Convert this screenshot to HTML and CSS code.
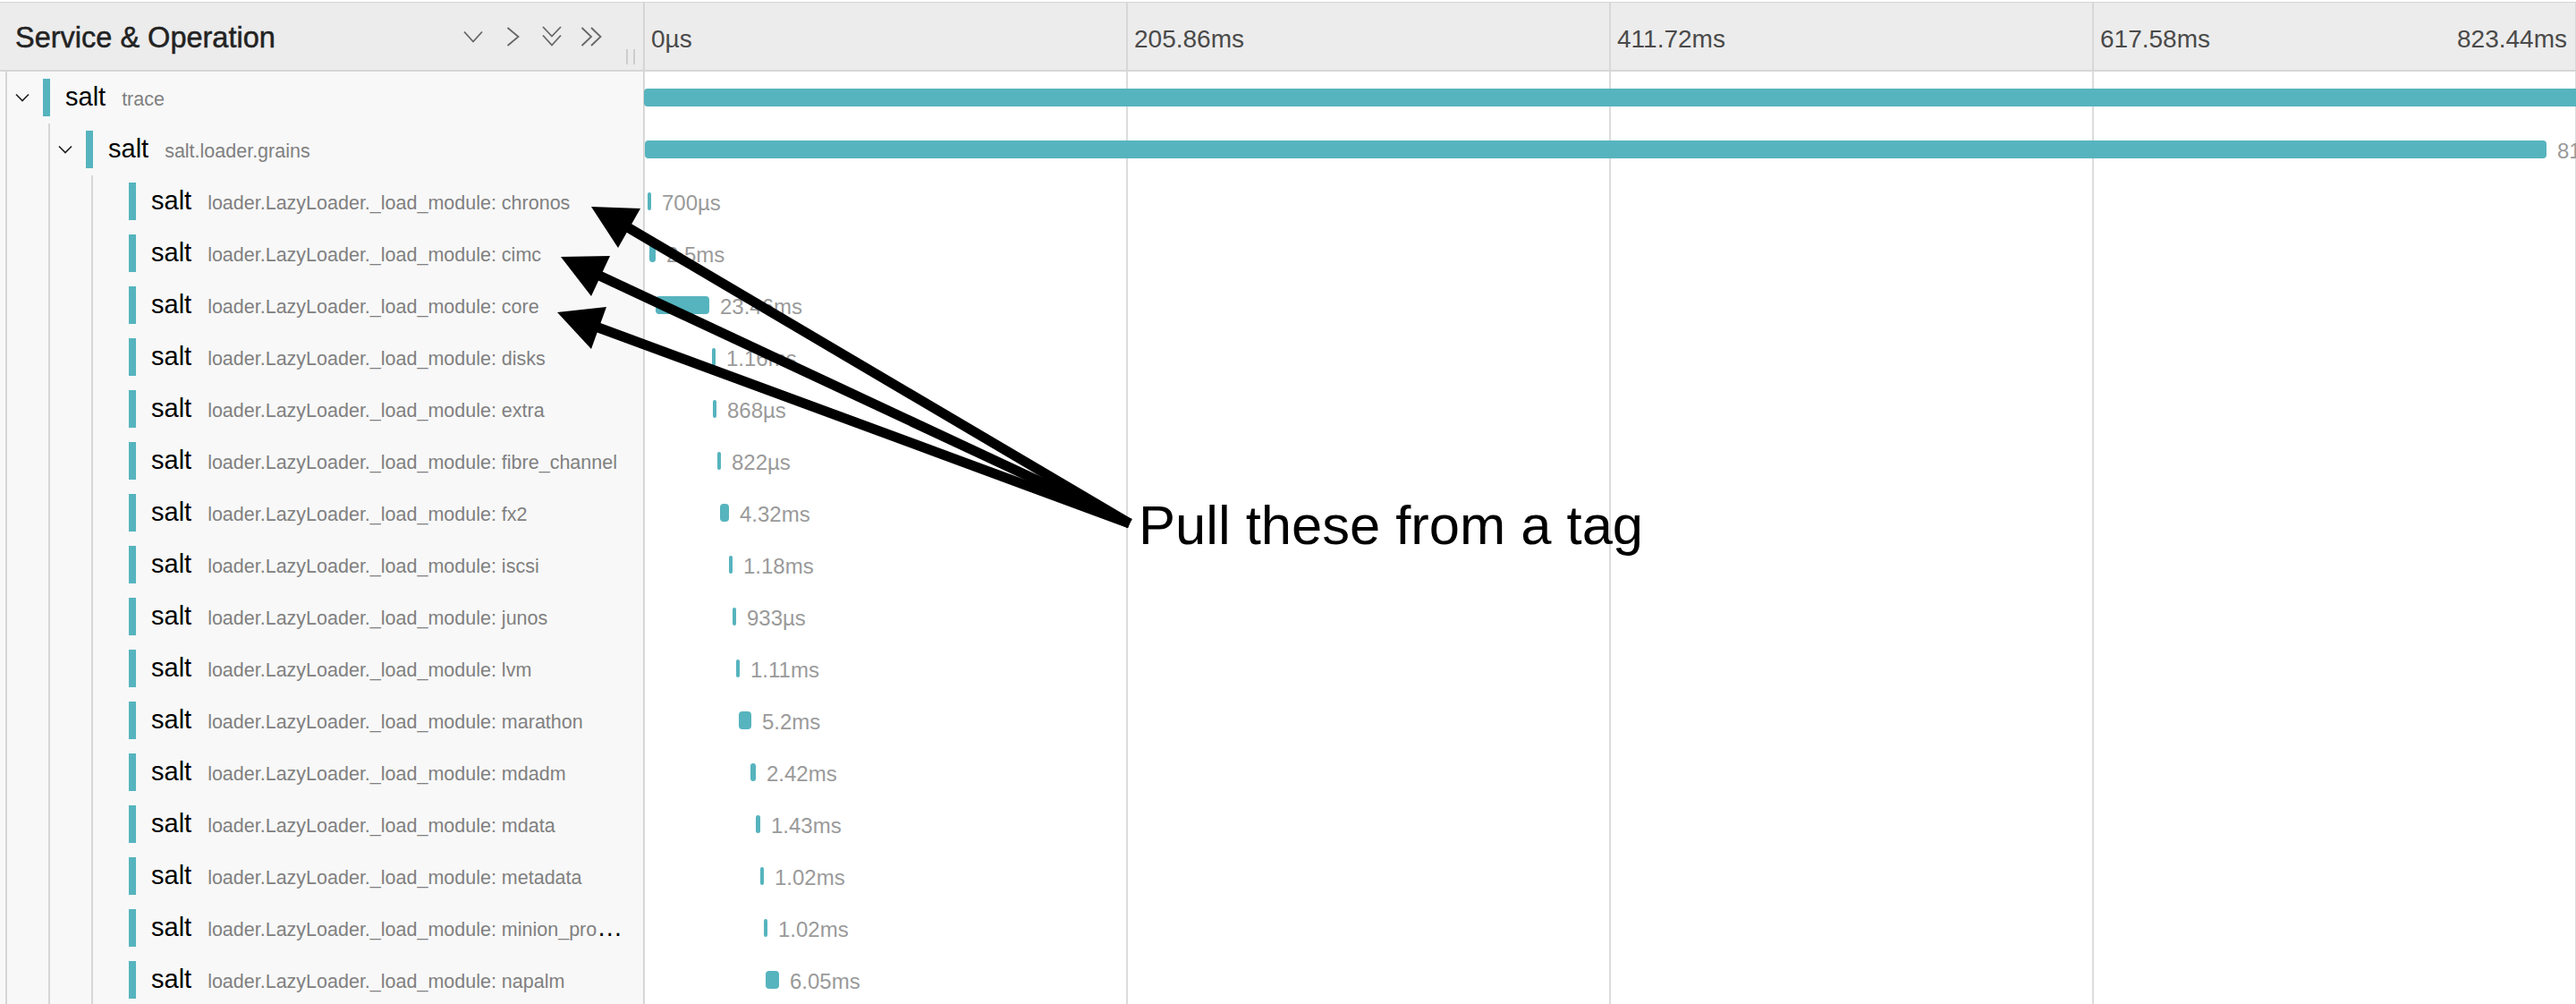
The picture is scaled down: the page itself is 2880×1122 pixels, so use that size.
FILE: index.html
```html
<!DOCTYPE html>
<html lang="en">
<head>
<meta charset="utf-8">
<title>Trace timeline</title>
<link rel="stylesheet" href="styles.css">
</head>
<body>
<div class="page">
  <div class="header">
    <div class="hdr-left">
      <span class="title">Service &amp; Operation</span>
      <div class="hdr-icons">
        <span class="hdr-btn"><svg width="22" height="14" viewBox="0 0 22 14"><path d="M1 1.5 L11 12.5 L21 1.5"/></svg></span>
        <span class="hdr-btn"><svg width="15" height="22" viewBox="0 0 15 22"><path d="M1.5 1 L13.5 11 L1.5 21"/></svg></span>
        <span class="hdr-btn"><svg width="22" height="23" viewBox="0 0 22 23"><path d="M1 1 L11 11.5 L21 1 M1 10.5 L11 21.5 L21 10.5"/></svg></span>
        <span class="hdr-btn"><svg width="25" height="22" viewBox="0 0 25 22"><path d="M1.5 1 L12 11 L1.5 21 M12 1 L22.5 11 L12 21"/></svg></span>
      </div>
      <span class="handle"></span>
    </div>
    <div class="hdr-ticks">
      <div class="tick"><span>0µs</span></div>
      <div class="tick"><span>205.86ms</span></div>
      <div class="tick"><span>411.72ms</span></div>
      <div class="tick"><span>617.58ms</span><span>823.44ms</span></div>
    </div>
  </div>

  <div class="rows">
    <div class="row">
      <div class="row-left">
        <span class="guide"><svg class="chev" width="16" height="10" viewBox="0 0 16 10"><path d="M1 1.5 L8 8.5 L15 1.5"/></svg></span>
        <span class="svc-bar"></span>
        <div class="name">salt<span class="op">trace</span></div>
      </div>
      <div class="row-tl"><span class="bar" style="margin-left:0px;width:2200px"></span></div>
    </div>

    <div class="row">
      <div class="row-left">
        <span class="guide"></span>
        <span class="guide"><svg class="chev" width="16" height="10" viewBox="0 0 16 10"><path d="M1 1.5 L8 8.5 L15 1.5"/></svg></span>
        <span class="svc-bar"></span>
        <div class="name">salt<span class="op">salt.loader.grains</span></div>
      </div>
      <div class="row-tl"><span class="bar" style="margin-left:1px;width:2126px"></span><span class="dur">818.33ms</span></div>
    </div>

    <div class="row">
      <div class="row-left"><span class="guide"></span><span class="guide"></span><span class="guide"></span><span class="svc-bar"></span>
        <div class="name">salt<span class="op">loader.LazyLoader._load_module: chronos</span></div></div>
      <div class="row-tl"><span class="bar" style="margin-left:4px;width:4px"></span><span class="dur">700µs</span></div>
    </div>

    <div class="row">
      <div class="row-left"><span class="guide"></span><span class="guide"></span><span class="guide"></span><span class="svc-bar"></span>
        <div class="name">salt<span class="op">loader.LazyLoader._load_module: cimc</span></div></div>
      <div class="row-tl"><span class="bar" style="margin-left:6px;width:7px"></span><span class="dur">2.5ms</span></div>
    </div>

    <div class="row">
      <div class="row-left"><span class="guide"></span><span class="guide"></span><span class="guide"></span><span class="svc-bar"></span>
        <div class="name">salt<span class="op">loader.LazyLoader._load_module: core</span></div></div>
      <div class="row-tl"><span class="bar" style="margin-left:13px;width:60px"></span><span class="dur">23.46ms</span></div>
    </div>

    <div class="row">
      <div class="row-left"><span class="guide"></span><span class="guide"></span><span class="guide"></span><span class="svc-bar"></span>
        <div class="name">salt<span class="op">loader.LazyLoader._load_module: disks</span></div></div>
      <div class="row-tl"><span class="bar" style="margin-left:76px;width:4px"></span><span class="dur">1.16ms</span></div>
    </div>

    <div class="row">
      <div class="row-left"><span class="guide"></span><span class="guide"></span><span class="guide"></span><span class="svc-bar"></span>
        <div class="name">salt<span class="op">loader.LazyLoader._load_module: extra</span></div></div>
      <div class="row-tl"><span class="bar" style="margin-left:77px;width:4px"></span><span class="dur">868µs</span></div>
    </div>

    <div class="row">
      <div class="row-left"><span class="guide"></span><span class="guide"></span><span class="guide"></span><span class="svc-bar"></span>
        <div class="name">salt<span class="op">loader.LazyLoader._load_module: fibre_channel</span></div></div>
      <div class="row-tl"><span class="bar" style="margin-left:82px;width:4px"></span><span class="dur">822µs</span></div>
    </div>

    <div class="row">
      <div class="row-left"><span class="guide"></span><span class="guide"></span><span class="guide"></span><span class="svc-bar"></span>
        <div class="name">salt<span class="op">loader.LazyLoader._load_module: fx2</span></div></div>
      <div class="row-tl"><span class="bar" style="margin-left:85px;width:10px"></span><span class="dur">4.32ms</span></div>
    </div>

    <div class="row">
      <div class="row-left"><span class="guide"></span><span class="guide"></span><span class="guide"></span><span class="svc-bar"></span>
        <div class="name">salt<span class="op">loader.LazyLoader._load_module: iscsi</span></div></div>
      <div class="row-tl"><span class="bar" style="margin-left:95px;width:4px"></span><span class="dur">1.18ms</span></div>
    </div>

    <div class="row">
      <div class="row-left"><span class="guide"></span><span class="guide"></span><span class="guide"></span><span class="svc-bar"></span>
        <div class="name">salt<span class="op">loader.LazyLoader._load_module: junos</span></div></div>
      <div class="row-tl"><span class="bar" style="margin-left:99px;width:4px"></span><span class="dur">933µs</span></div>
    </div>

    <div class="row">
      <div class="row-left"><span class="guide"></span><span class="guide"></span><span class="guide"></span><span class="svc-bar"></span>
        <div class="name">salt<span class="op">loader.LazyLoader._load_module: lvm</span></div></div>
      <div class="row-tl"><span class="bar" style="margin-left:103px;width:4px"></span><span class="dur">1.11ms</span></div>
    </div>

    <div class="row">
      <div class="row-left"><span class="guide"></span><span class="guide"></span><span class="guide"></span><span class="svc-bar"></span>
        <div class="name">salt<span class="op">loader.LazyLoader._load_module: marathon</span></div></div>
      <div class="row-tl"><span class="bar" style="margin-left:106px;width:14px"></span><span class="dur">5.2ms</span></div>
    </div>

    <div class="row">
      <div class="row-left"><span class="guide"></span><span class="guide"></span><span class="guide"></span><span class="svc-bar"></span>
        <div class="name">salt<span class="op">loader.LazyLoader._load_module: mdadm</span></div></div>
      <div class="row-tl"><span class="bar" style="margin-left:119px;width:6px"></span><span class="dur">2.42ms</span></div>
    </div>

    <div class="row">
      <div class="row-left"><span class="guide"></span><span class="guide"></span><span class="guide"></span><span class="svc-bar"></span>
        <div class="name">salt<span class="op">loader.LazyLoader._load_module: mdata</span></div></div>
      <div class="row-tl"><span class="bar" style="margin-left:125px;width:5px"></span><span class="dur">1.43ms</span></div>
    </div>

    <div class="row">
      <div class="row-left"><span class="guide"></span><span class="guide"></span><span class="guide"></span><span class="svc-bar"></span>
        <div class="name">salt<span class="op">loader.LazyLoader._load_module: metadata</span></div></div>
      <div class="row-tl"><span class="bar" style="margin-left:130px;width:4px"></span><span class="dur">1.02ms</span></div>
    </div>

    <div class="row">
      <div class="row-left"><span class="guide"></span><span class="guide"></span><span class="guide"></span><span class="svc-bar"></span>
        <div class="name">salt<span class="op">loader.LazyLoader._load_module: minion_process</span></div></div>
      <div class="row-tl"><span class="bar" style="margin-left:134px;width:4px"></span><span class="dur">1.02ms</span></div>
    </div>

    <div class="row">
      <div class="row-left"><span class="guide"></span><span class="guide"></span><span class="guide"></span><span class="svc-bar"></span>
        <div class="name">salt<span class="op">loader.LazyLoader._load_module: napalm</span></div></div>
      <div class="row-tl"><span class="bar" style="margin-left:136px;width:15px"></span><span class="dur">6.05ms</span></div>
    </div>
  </div>

  <svg class="arrows" width="2880" height="1122" viewBox="0 0 2880 1122">
    <g class="shafts">
      <line x1="1263" y1="585" x2="700" y2="253"/>
      <line x1="1263" y1="585" x2="668" y2="307"/>
      <line x1="1263" y1="585" x2="666" y2="365"/>
    </g>
    <g class="heads">
      <polygon points="661,231 716,233 691,277"/>
      <polygon points="627,287 682,286 661,331"/>
      <polygon points="623,349 678,343 661,390"/>
    </g>
  </svg>
  <div class="note">Pull these from a tag</div>
</div>
</body>
</html>
```

FILE: styles.css
```css
html, body {
  margin: 0;
  padding: 0;
  background: #ffffff;
}

body {
  font-family: "Liberation Sans", Arial, Helvetica, sans-serif;
}

.page {
  position: relative;
  width: 2880px;
  height: 1122px;
  overflow: hidden;
}

/* ---------- header ---------- */
.header {
  display: flex;
  height: 75px;
  margin-top: 2px;
  border-top: 1px solid #d6d6d6;
  border-bottom: 2px solid #d6d6d6;
  background: #ececec;
}

.hdr-left {
  width: 720px;
  flex: none;
  box-sizing: border-box;
  border-right: 1px solid #d2d2d2;
  display: flex;
  align-items: center;
  padding-left: 17px;
}

.title {
  flex: 1;
  font-size: 32.5px;
  color: #222;
  padding-top: 4px;
  white-space: nowrap;
  -webkit-text-stroke: 0.5px #222;
}

.hdr-icons {
  display: flex;
}

.hdr-btn {
  width: 44px;
  display: flex;
  justify-content: center;
  align-items: center;
}

.hdr-btn svg path {
  fill: none;
  stroke: #666;
  stroke-width: 1.8;
}

.handle {
  align-self: flex-end;
  margin: 0 9px 6px 17px;
  width: 10px;
  height: 17px;
  box-sizing: border-box;
  border-left: 2px solid #cdcdcd;
  border-right: 2px solid #cdcdcd;
}

.hdr-ticks {
  flex: 1;
  display: grid;
  grid-template-columns: repeat(4, 1fr);
  background: linear-gradient(to right, #d8d8d8 2px, transparent 2px) -1px 0 / 25% 100% repeat-x;
}

.tick {
  display: flex;
  align-items: center;
  justify-content: space-between;
  padding: 6px 10px 0 8px;
  font-size: 28px;
  color: #4a4a4a;
  white-space: nowrap;
}

/* ---------- rows ---------- */
.row {
  display: flex;
  height: 58px;
}

.row-left {
  width: 720px;
  flex: none;
  box-sizing: border-box;
  border-right: 1px solid #d2d2d2;
  background: #f8f8f8;
  display: flex;
}

.guide {
  width: 48px;
  flex: none;
  display: flex;
  align-items: center;
  background: linear-gradient(#d6d6d6, #d6d6d6) 6px 0 / 2px 100% no-repeat;
}

.chev {
  margin-left: 17px;
}

.chev path {
  fill: none;
  stroke: #222;
  stroke-width: 1.7;
}

.svc-bar {
  flex: none;
  width: 8px;
  height: 42px;
  align-self: center;
  background: #56b4be;
}

.name {
  flex: 1;
  min-width: 0;
  align-self: center;
  margin: 0 0 2px 17px;
  padding-right: 18px;
  font-size: 29px;
  color: #000;
  white-space: nowrap;
  overflow: hidden;
  text-overflow: ellipsis;
}

.op {
  margin-left: 18px;
  font-size: 21.5px;
  color: #808080;
}

.row-tl {
  flex: 1;
  min-width: 0;
  overflow: hidden;
  display: flex;
  align-items: center;
  background: linear-gradient(to right, #dcdcdc 2px, transparent 2px) -1px 0 / 25% 100% repeat-x;
}

.bar {
  flex: none;
  height: 20px;
  border-radius: 4px;
  background: #56b4be;
}

.dur {
  flex: none;
  margin-left: 12px;
  padding-top: 3px;
  font-size: 24px;
  color: #9a9a9a;
  white-space: nowrap;
}

/* ---------- annotation overlay ---------- */
.arrows {
  position: absolute;
  left: 0;
  top: 0;
  pointer-events: none;
}

.shafts line {
  stroke: #000;
  stroke-width: 11;
}

.heads polygon {
  fill: #000;
}

.note {
  position: absolute;
  left: 1273px;
  top: 556px;
  font-size: 61.5px;
  line-height: 61.5px;
  color: #000;
  white-space: nowrap;
}
```
